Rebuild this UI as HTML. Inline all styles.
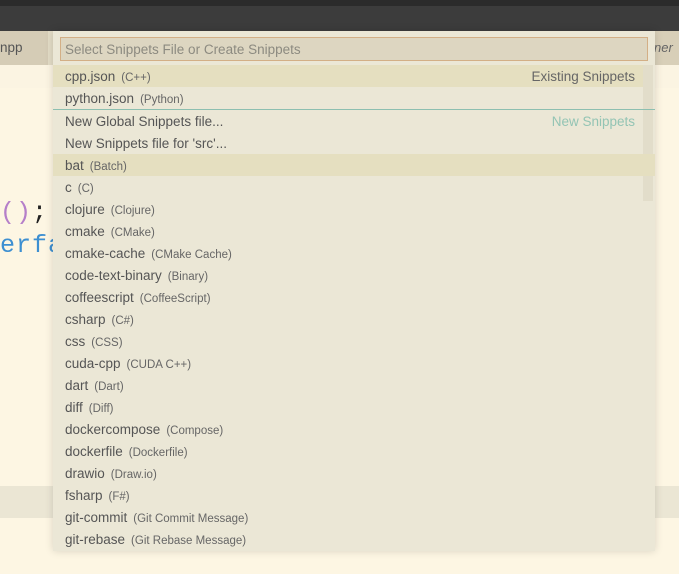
<!DOCTYPE html><html><head><style>
*{margin:0;padding:0;box-sizing:border-box}
body{width:679px;height:574px;overflow:hidden;background:#fdf6e3;position:relative;font-family:"Liberation Sans","DejaVu Sans",sans-serif}
.abs{position:absolute}
.qp{left:53px;top:31px;width:602px;height:520px;background:#ebe7d6;box-shadow:0 0 8px rgba(0,0,0,.15)}
.inp{left:7px;top:6px;width:588px;height:24px;background:#ddd6c1;border:1px solid #d3af86;font-size:13.5px;color:#8c8a80;padding:3px 4px;line-height:17px}
.row{position:absolute;left:0;width:590px;height:22px;line-height:23px;padding-left:12px;font-size:13.5px;color:#555}
.row small{font-size:11.5px;color:#666;margin-left:6px}
.hl{background:#e5dfc0}
.lab{position:absolute;right:8px;top:0;font-size:13.5px}
</style></head><body>
<div class="abs" style="left:0;top:0;width:679px;height:6px;background:#2b2b2b"></div>
<div class="abs" style="left:0;top:6px;width:679px;height:25px;background:#3c3c3c"></div>
<div class="abs" style="left:0;top:31px;width:679px;height:34px;background:#e3dcc6"></div>
<div class="abs" style="left:0;top:31px;width:48px;height:34px;background:#d5ccb6;font-size:13.5px;color:#555;line-height:34px">npp</div>
<div class="abs" style="left:640px;top:31px;width:39px;height:34px;background:#d8cfb8;font-size:13px;color:#666;line-height:34px;font-style:italic;padding-left:14px">ner</div>
<div class="abs" style="left:0;top:65px;width:679px;height:23px;background:#fbf4e2"></div>
<div class="abs" style="left:0;top:198px;font-family:'Liberation Mono',monospace;font-size:25px;color:#b57fc9;letter-spacing:1px">(<span>)</span><span style="color:#222">;</span></div>
<div class="abs" style="left:0;top:231px;font-family:'Liberation Mono',monospace;font-size:25px;color:#3d8fd1;letter-spacing:1px">erfa</div>
<div class="abs" style="left:0;top:486px;width:679px;height:32px;background:#ebe6d4"></div>
<div class="abs qp">
<div class="abs inp">Select Snippets File or Create Snippets</div>
<div class="abs" style="left:590px;top:34px;width:10px;height:136px;background:#e2ddca"></div>
<div class="row hl" style="top:34px">cpp.json<small>(C++)</small><span class="lab" style="color:#666">Existing Snippets</span></div>
<div class="row" style="top:56px">python.json<small>(Python)</small></div>
<div class="abs" style="left:0;top:78px;width:602px;height:1px;background:#8dbfb0"></div>
<div class="row" style="top:79px">New Global Snippets file...<span class="lab" style="color:#93c4b4">New Snippets</span></div>
<div class="row" style="top:101px">New Snippets file for 'src'...</div>
<div class="row hl" style="top:123px;width:602px">bat<small>(Batch)</small></div>
<div class="row" style="top:145px">c<small>(C)</small></div>
<div class="row" style="top:167px">clojure<small>(Clojure)</small></div>
<div class="row" style="top:189px">cmake<small>(CMake)</small></div>
<div class="row" style="top:211px">cmake-cache<small>(CMake Cache)</small></div>
<div class="row" style="top:233px">code-text-binary<small>(Binary)</small></div>
<div class="row" style="top:255px">coffeescript<small>(CoffeeScript)</small></div>
<div class="row" style="top:277px">csharp<small>(C#)</small></div>
<div class="row" style="top:299px">css<small>(CSS)</small></div>
<div class="row" style="top:321px">cuda-cpp<small>(CUDA C++)</small></div>
<div class="row" style="top:343px">dart<small>(Dart)</small></div>
<div class="row" style="top:365px">diff<small>(Diff)</small></div>
<div class="row" style="top:387px">dockercompose<small>(Compose)</small></div>
<div class="row" style="top:409px">dockerfile<small>(Dockerfile)</small></div>
<div class="row" style="top:431px">drawio<small>(Draw.io)</small></div>
<div class="row" style="top:453px">fsharp<small>(F#)</small></div>
<div class="row" style="top:475px">git-commit<small>(Git Commit Message)</small></div>
<div class="row" style="top:497px">git-rebase<small>(Git Rebase Message)</small></div>
</div>
</body></html>
